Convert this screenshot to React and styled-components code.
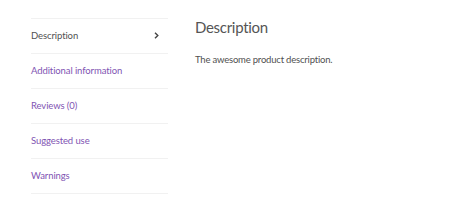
import React from 'react';
import styled, { createGlobalStyle } from 'styled-components';

const GlobalStyle = createGlobalStyle`
  body {
    margin: 0;
    background: #fff;
    font-family: Lato, "Liberation Sans", sans-serif;
  }
`;

const Page = styled.div`
  display: flex;
  align-items: flex-start;
  gap: 27px;
  padding: 18px 0 0 31px;
`;

const Tabs = styled.ul`
  list-style: none;
  margin: 0;
  padding: 0;
  width: 137px;
  border-top: 1px solid #f1f1f1;
`;

const Tab = styled.li`
  display: flex;
  align-items: center;
  justify-content: space-between;
  box-sizing: border-box;
  height: 35px;
  padding: 0 9px 2px 0;
  border-bottom: 1px solid #f1f1f1;
  font-size: 9.5px;
  letter-spacing: -0.1px;
  color: ${(p) => (p.$active ? '#515151' : '#7f54b3')};
`;

const Chevron = styled.svg`
  width: 5px;
  height: 7px;
`;

const Panel = styled.section`
  padding-top: 0;
`;

const Title = styled.h2`
  margin: 0;
  font-size: 15px;
  font-weight: 400;
  letter-spacing: -0.3px;
  color: #555;
  line-height: 18px;
`;

const Text = styled.p`
  margin: 18px 0 0;
  font-size: 9.5px;
  letter-spacing: -0.2px;
  color: #515151;
`;

const tabs = [
  'Description',
  'Additional information',
  'Reviews (0)',
  'Suggested use',
  'Warnings',
];

export default function App() {
  return (
    <>
      <GlobalStyle />
      <Page>
        <Tabs>
          {tabs.map((t, i) => (
            <Tab key={t} $active={i === 0}>
              {t}
              {i === 0 && (
                <Chevron viewBox="0 0 5 7">
                  <path d="M1 0.8 L3.8 3.5 L1 6.2" fill="none" stroke="#444" strokeWidth="1.4" />
                </Chevron>
              )}
            </Tab>
          ))}
        </Tabs>
        <Panel>
          <Title>Description</Title>
          <Text>The awesome product description.</Text>
        </Panel>
      </Page>
    </>
  );
}
